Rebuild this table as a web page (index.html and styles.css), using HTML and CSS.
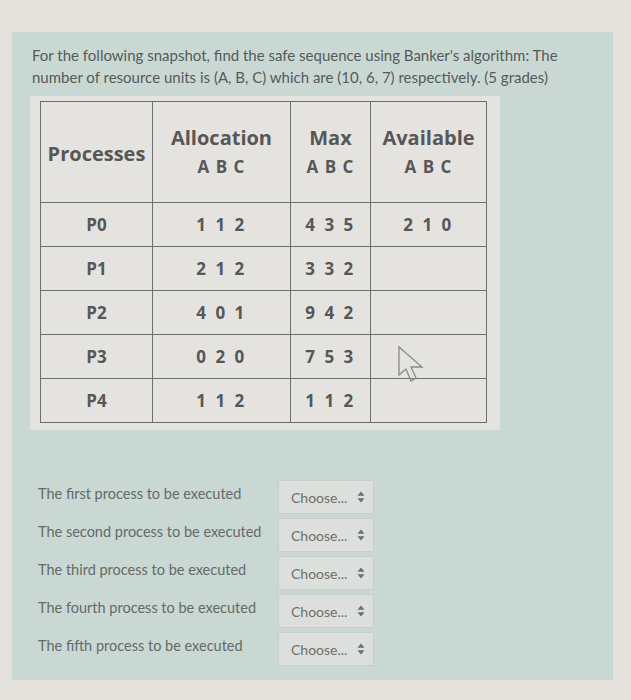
FILE: index.html
```html
<!DOCTYPE html>
<html>
<head>
<meta charset="utf-8">
<link rel="stylesheet" href="styles.css">
</head>
<body>
<div class="panel">
  <p class="question">For the following snapshot, find the safe sequence using Banker's algorithm: The number of resource units is (A, B, C) which are (10, 6, 7) respectively. (5 grades)</p>
  <div class="table-box">
    <table class="snap">
      <colgroup><col class="c1"><col class="c2"><col class="c3"><col class="c4"></colgroup>
      <thead>
        <tr class="head">
          <th>Processes</th>
          <th><span class="lg">Allocation</span><br>A B C</th>
          <th><span class="lg">Max</span><br>A B C</th>
          <th><span class="lg">Available</span><br>A B C</th>
        </tr>
      </thead>
      <tbody>
        <tr><td>P0</td><td class="n">1 1 2</td><td class="n">4 3 5</td><td class="n">2 1 0</td></tr>
        <tr><td>P1</td><td class="n">2 1 2</td><td class="n">3 3 2</td><td></td></tr>
        <tr><td>P2</td><td class="n">4 0 1</td><td class="n">9 4 2</td><td></td></tr>
        <tr><td>P3</td><td class="n">0 2 0</td><td class="n">7 5 3</td><td class="cursor-cell"><svg class="cursor" width="28" height="40" viewBox="0 0 28 40"><path d="M2 2 L2 30 L9 24 L14 36 L19 33 L14 22 L25 22 Z" fill="none" stroke="#8a8a8a" stroke-width="1.3" stroke-linejoin="miter"/></svg></td></tr>
        <tr><td>P4</td><td class="n">1 1 2</td><td class="n">1 1 2</td><td></td></tr>
      </tbody>
    </table>
  </div>
  <div class="answers">
    <div class="arow"><span class="label">The first process to be executed</span><span class="select">Choose...<svg class="arr" width="8" height="12" viewBox="0 0 8 12"><path d="M4 0.5 L7.5 4.8 L0.5 4.8 Z M4 11.5 L7.5 7.2 L0.5 7.2 Z" fill="#6b6f6d"/></svg></span></div>
    <div class="arow"><span class="label">The second process to be executed</span><span class="select">Choose...<svg class="arr" width="8" height="12" viewBox="0 0 8 12"><path d="M4 0.5 L7.5 4.8 L0.5 4.8 Z M4 11.5 L7.5 7.2 L0.5 7.2 Z" fill="#6b6f6d"/></svg></span></div>
    <div class="arow"><span class="label">The third process to be executed</span><span class="select">Choose...<svg class="arr" width="8" height="12" viewBox="0 0 8 12"><path d="M4 0.5 L7.5 4.8 L0.5 4.8 Z M4 11.5 L7.5 7.2 L0.5 7.2 Z" fill="#6b6f6d"/></svg></span></div>
    <div class="arow"><span class="label">The fourth process to be executed</span><span class="select">Choose...<svg class="arr" width="8" height="12" viewBox="0 0 8 12"><path d="M4 0.5 L7.5 4.8 L0.5 4.8 Z M4 11.5 L7.5 7.2 L0.5 7.2 Z" fill="#6b6f6d"/></svg></span></div>
    <div class="arow"><span class="label">The fifth process to be executed</span><span class="select">Choose...<svg class="arr" width="8" height="12" viewBox="0 0 8 12"><path d="M4 0.5 L7.5 4.8 L0.5 4.8 Z M4 11.5 L7.5 7.2 L0.5 7.2 Z" fill="#6b6f6d"/></svg></span></div>
  </div>
</div>
</body>
</html>
```

FILE: styles.css
```css
html, body {
  margin: 0;
  padding: 0;
}
body {
  background: #e5e2de;
  width: 631px;
  height: 700px;
  overflow: hidden;
  font-family: "Lato", "Open Sans", sans-serif;
  color: #555;
}
.panel {
  margin: 32px 18px 0 12px;
  height: 648px;
  background: #cad8d3;
  padding: 12px 0 0 0;
  box-sizing: border-box;
}
.question {
  margin: 0 0 0 20px;
  width: 560px;
  font-size: 15px;
  line-height: 22px;
  color: #555a5a;
}
.table-box {
  margin: 8px 0 0 18px;
  width: 470px;
  box-sizing: border-box;
  padding: 5px 14px 7px 10px;
  background: #e4e3df;
}
.snap {
  border-collapse: collapse;
  font-family: "Open Sans", sans-serif;
  font-weight: 700;
  color: #575757;
  table-layout: fixed;
  width: 446px;
}
.c1 { width: 112px; }
.c2 { width: 138px; }
.c3 { width: 80px; }
.c4 { width: 116px; }
.snap th, .snap td {
  border: 1px solid #6d6d6d;
  text-align: center;
  padding: 0;
}
.snap th {
  height: 96px;
  font-size: 17px;
  line-height: 28px;
  letter-spacing: 1px;
}
.snap th .lg {
  font-size: 20px;
  letter-spacing: 0;
}
.snap th:first-child {
  font-size: 20px;
  letter-spacing: 0;
  padding-top: 4px;
}
.snap td {
  height: 43px;
  font-size: 17px;
}
.snap td.n {
  letter-spacing: 2.5px;
}
.cursor-cell {
  position: relative;
}
.cursor {
  position: absolute;
  left: 26px;
  top: 10px;
}
.answers {
  margin: 50px 0 0 26px;
  display: flex;
  flex-direction: column;
  gap: 4px;
}
.arow {
  display: flex;
  align-items: center;
  height: 34px;
}
.label {
  width: 240px;
  font-size: 14.5px;
  color: #636a68;
  margin-top: -8px;
}
.select {
  display: flex;
  align-items: center;
  justify-content: space-between;
  width: 96px;
  height: 34px;
  box-sizing: border-box;
  padding: 0 8px 0 12px;
  background: #dcdfdb;
  border: 1px solid #c8cfcb;
  font-size: 14px;
  color: #6b6f6d;
}
.arr {
  display: block;
}
```
